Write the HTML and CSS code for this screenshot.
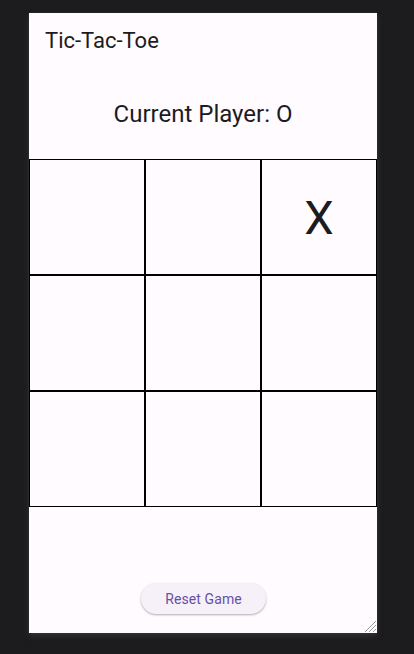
FILE: index.html
```html
<!DOCTYPE html>
<html>
<head>
<meta charset="utf-8">
<link rel="stylesheet" href="styles.css">
</head>
<body>
<div class="frame">
  <header class="appbar"><span class="title">Tic-Tac-Toe</span></header>
  <div class="status">Current Player: O</div>
  <div class="board">
    <div class="cell"></div>
    <div class="cell"></div>
    <div class="cell">X</div>
    <div class="cell"></div>
    <div class="cell"></div>
    <div class="cell"></div>
    <div class="cell"></div>
    <div class="cell"></div>
    <div class="cell"></div>
  </div>
  <div class="footer">
    <button class="reset">Reset Game</button>
  </div>
  <svg class="grip" width="12" height="12" viewBox="0 0 12 12">
    <line x1="1" y1="12" x2="12" y2="1" stroke="#9a9a9a" stroke-width="1"/>
    <line x1="5" y1="12" x2="12" y2="5" stroke="#9a9a9a" stroke-width="1"/>
    <line x1="9" y1="12" x2="12" y2="9" stroke="#9a9a9a" stroke-width="1"/>
  </svg>
</div>
</body>
</html>
```

FILE: styles.css
```css
html, body {
  margin: 0;
  padding: 0;
  background: #1c1c1e;
  height: 100%;
}
body {
  padding: 13px 0 0 29px;
  box-sizing: border-box;
  font-family: Roboto, "Liberation Sans", sans-serif;
}
.frame {
  position: relative;
  width: 348px;
  height: 620px;
  background: #fffbfe;
  display: flex;
  flex-direction: column;
  box-shadow: 0 3px 6px rgba(90, 90, 92, 0.35), 0 0 2px rgba(90, 90, 92, 0.3);
}
.appbar {
  height: 56px;
  display: flex;
  align-items: center;
  padding-left: 16px;
  flex: none;
}
.title {
  font-size: 22px;
  color: #1c1b1f;
  line-height: 28px;
}
.status {
  height: 90px;
  flex: none;
  display: flex;
  align-items: center;
  justify-content: center;
  font-size: 24px;
  color: #1c1b1f;
  line-height: 28px;
}
.board {
  display: grid;
  grid-template-columns: repeat(3, 116px);
  grid-template-rows: repeat(3, 116px);
  flex: none;
}
.cell {
  box-sizing: border-box;
  border: 1px solid #000;
  display: flex;
  align-items: center;
  justify-content: center;
  font-size: 47px;
  color: #1c1b1f;
  line-height: 1;
}
.footer {
  flex: 1;
  display: flex;
  align-items: flex-end;
  justify-content: center;
  padding-bottom: 19px;
}
.reset {
  width: 125px;
  height: 31px;
  border: none;
  border-radius: 16px;
  background: #f6f1f9;
  color: #6750a4;
  font-family: Roboto, "Liberation Sans", sans-serif;
  font-size: 14px;
  font-weight: 400;
  letter-spacing: 0.1px;
  box-shadow: 0 1px 2px rgba(0, 0, 0, 0.25), 0 1px 3px rgba(0, 0, 0, 0.08);
  padding: 0;
  margin-left: 1px;
}
.grip {
  position: absolute;
  right: 1px;
  bottom: 1px;
}
```
